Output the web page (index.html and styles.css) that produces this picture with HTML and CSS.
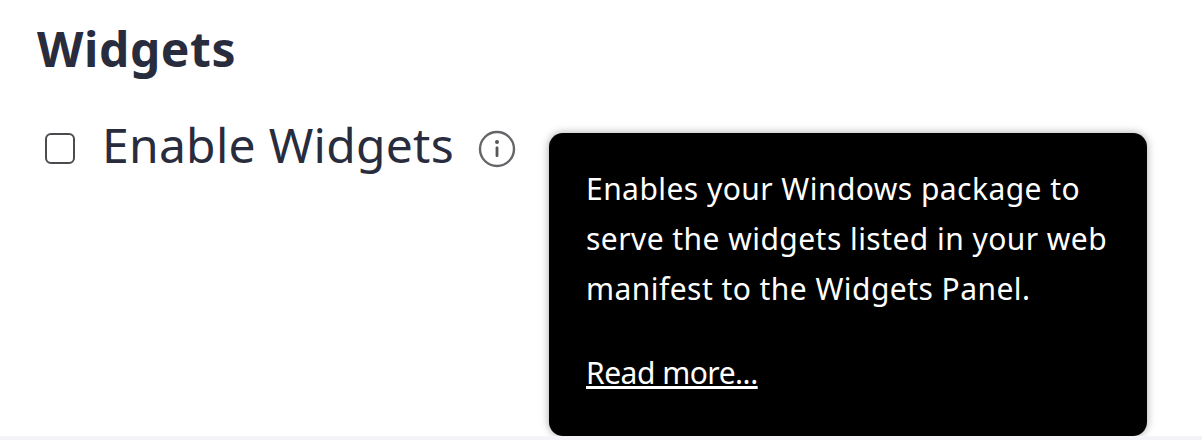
FILE: index.html
```html
<!DOCTYPE html>
<html lang="en">
<head>
<meta charset="utf-8">
<title>Widgets</title>
<link rel="stylesheet" href="styles.css">
</head>
<body>
<main class="panel">
  <h1 class="title">Widgets</h1>
  <div class="option">
    <span class="checkbox"></span>
    <span class="label">Enable Widgets</span>
    <svg class="info" viewBox="0 0 38 38" aria-hidden="true">
      <circle cx="19" cy="19" r="17" fill="none" stroke="#66666a" stroke-width="2.4"/>
      <circle cx="19" cy="12" r="2" fill="#55555a"/>
      <rect x="17.6" y="16.5" width="2.8" height="10.5" rx="1.2" fill="#55555a"/>
    </svg>
  </div>
  <aside class="tooltip">
    <p class="tip-text">Enables your Windows package to serve the widgets listed in your web manifest to the Widgets Panel.</p>
    <a class="tip-link" href="#">Read more...</a>
  </aside>
</main>
</body>
</html>
```
FILE: styles.css
```css
html, body {
  margin: 0;
  padding: 0;
  background: #f3f3f8;
  overflow: hidden;
}
.panel {
  position: relative;
  box-sizing: border-box;
  height: 436px;
  padding: 17px 0 0 37px;
  background: #fff;
  font-family: "Noto Sans", sans-serif;
  color: #292c3d;
}
.title {
  margin: 0;
  font-size: 48px;
  line-height: 64px;
  font-weight: 700;
  letter-spacing: 0.6px;
}
.option {
  display: flex;
  align-items: center;
  margin-top: 32px;
  padding-left: 8px;
}
.checkbox {
  box-sizing: border-box;
  width: 30px;
  height: 31px;
  border: 2.5px solid #4c4c50;
  border-radius: 6px;
  margin-top: 6px;
}
.label {
  margin-left: 27px;
  font-size: 48px;
  line-height: 64px;
  font-weight: 400;
  letter-spacing: 0.27px;
}
.info {
  width: 38px;
  height: 38px;
  margin: 7px 0 0 24px;
}
.tooltip {
  position: absolute;
  left: 549px;
  top: 133px;
  box-sizing: border-box;
  width: 598px;
  height: 303px;
  padding: 31px 30px 0 37px;
  background: #000;
  border-radius: 14px;
  box-shadow: 0 0 8px rgba(0, 0, 0, 0.35);
  color: #fff;
  font-size: 30px;
  line-height: 50px;
  letter-spacing: 0.45px;
}
.tip-text {
  margin: 0 0 34px;
}
.tip-link {
  color: #fff;
  text-decoration: underline;
  letter-spacing: -0.5px;
}
```
